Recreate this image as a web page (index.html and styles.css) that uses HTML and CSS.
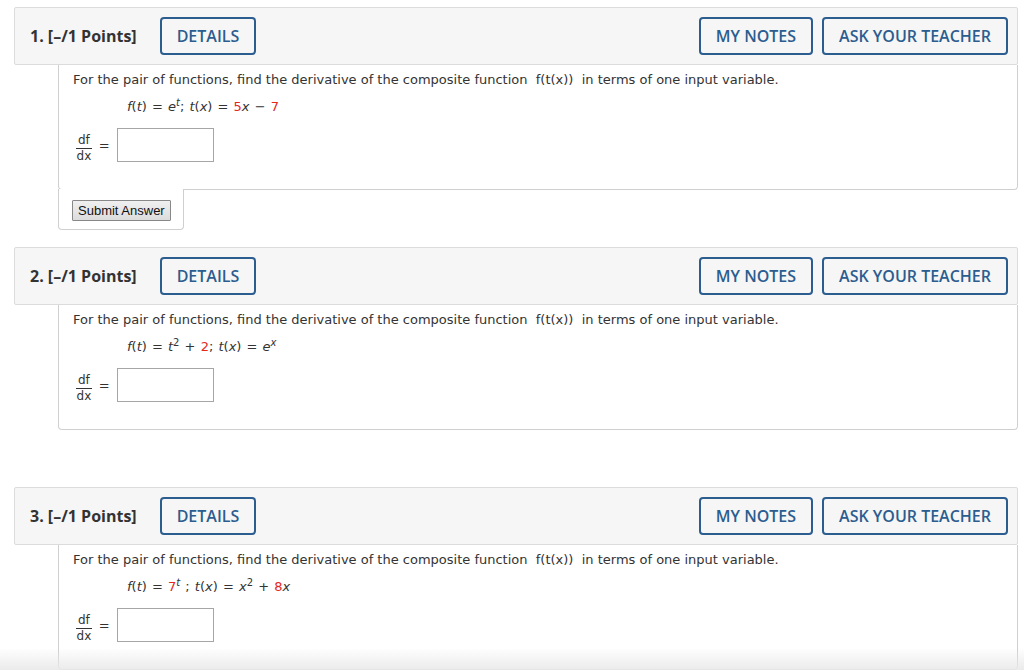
FILE: index.html
```html
<!DOCTYPE html>
<html lang="en">
<head>
    <meta charset="UTF-8">
    <meta name="viewport" content="width=device-width, initial-scale=1.0">
    <title>Assignment</title>
    <link rel="stylesheet" href="styles.css">
</head>
<body>

<div class="page">

    <div class="question">
        <div class="q-head">
            <span class="q-title">1. [&ndash;/1 Points]</span>
            <button type="button" class="btn details">DETAILS</button>
            <div class="q-tools">
                <button type="button" class="btn">MY NOTES</button>
                <button type="button" class="btn">ASK YOUR TEACHER</button>
            </div>
        </div>
        <div class="q-body">
            <p class="prompt">For the pair of functions, find the derivative of the composite function&nbsp; f(t(x))&nbsp; in terms of one input variable.</p>
            <div class="formula">
                <i>f</i>(<i>t</i>) = <i>e</i><sup><i>t</i></sup>; <i>t</i>(<i>x</i>) = <span class="red">5</span><i>x</i> &minus; <span class="red">7</span>
            </div>
            <div class="answer-row">
                <span class="frac"><span class="num">df</span><span class="den">dx</span></span>
                <span class="eq">=</span>
                <input type="text" class="answer">
            </div>
        </div>
        <div class="submit-row">
            <div class="submit-tab">
                <button type="button" class="submit">Submit Answer</button>
            </div>
        </div>
    </div>

    <div class="question">
        <div class="q-head">
            <span class="q-title">2. [&ndash;/1 Points]</span>
            <button type="button" class="btn details">DETAILS</button>
            <div class="q-tools">
                <button type="button" class="btn">MY NOTES</button>
                <button type="button" class="btn">ASK YOUR TEACHER</button>
            </div>
        </div>
        <div class="q-body">
            <p class="prompt">For the pair of functions, find the derivative of the composite function&nbsp; f(t(x))&nbsp; in terms of one input variable.</p>
            <div class="formula">
                <i>f</i>(<i>t</i>) = <i>t</i><sup>2</sup> + <span class="red">2</span>; <i>t</i>(<i>x</i>) = <i>e</i><sup><i>x</i></sup>
            </div>
            <div class="answer-row">
                <span class="frac"><span class="num">df</span><span class="den">dx</span></span>
                <span class="eq">=</span>
                <input type="text" class="answer">
            </div>
        </div>
        <div class="submit-row"></div>
    </div>

    <div class="question">
        <div class="q-head">
            <span class="q-title">3. [&ndash;/1 Points]</span>
            <button type="button" class="btn details">DETAILS</button>
            <div class="q-tools">
                <button type="button" class="btn">MY NOTES</button>
                <button type="button" class="btn">ASK YOUR TEACHER</button>
            </div>
        </div>
        <div class="q-body">
            <p class="prompt">For the pair of functions, find the derivative of the composite function&nbsp; f(t(x))&nbsp; in terms of one input variable.</p>
            <div class="formula">
                <i>f</i>(<i>t</i>) = <span class="red">7</span><sup><i>t</i></sup> ; <i>t</i>(<i>x</i>) = <i>x</i><sup>2</sup> + <span class="red">8</span><i>x</i>
            </div>
            <div class="answer-row">
                <span class="frac"><span class="num">df</span><span class="den">dx</span></span>
                <span class="eq">=</span>
                <input type="text" class="answer">
            </div>
        </div>
        <div class="submit-row"></div>
    </div>

</div>

<div class="bottom-fade"></div>

</body>
</html>
```

FILE: styles.css
```css
body {
    margin: 0;
    background-color: #fff;
    font-family: "DejaVu Sans", Verdana, sans-serif;
    color: #333;
    overflow: hidden;
}

.page {
    padding: 7px 6px 0 14px;
}

/* question header bar */
.q-head {
    display: flex;
    align-items: center;
    height: 56px;
    padding: 0 9px 0 15px;
    background-color: #f6f6f6;
    border: 1px solid #dcdcdc;
    border-radius: 2px;
}

.q-title {
    font-family: "Open Sans", sans-serif;
    font-weight: 700;
    font-size: 16px;
    color: #333;
    margin-right: 23px;
}

.q-tools {
    margin-left: auto;
    display: flex;
    gap: 9px;
}

.btn {
    height: 38px;
    padding: 0 15px;
    background-color: transparent;
    border: 2px solid #2c5d8f;
    border-radius: 4px;
    color: #2c5d8f;
    font-family: "Open Sans", sans-serif;
    font-weight: 600;
    font-size: 16px;
    cursor: pointer;
}

/* question body */
.q-body {
    margin-left: 44px;
    height: 125px;
    box-sizing: border-box;
    padding: 7px 14px 0;
    border: 1px solid #cfcfcf;
    border-top: none;
    border-radius: 0 0 4px 4px;
    font-size: 13px;
}

.prompt {
    margin: 0;
    line-height: 16px;
}

.formula {
    padding-left: 54px;
    margin-top: 11px;
    font-size: 13px;
    line-height: 16px;
    word-spacing: 1px;
}

.formula sup {
    font-size: 10px;
    line-height: 0;
}

.red {
    color: #e3281b;
}

.answer-row {
    display: flex;
    align-items: center;
    margin-top: 12px;
    padding-left: 3px;
}

.frac {
    display: inline-flex;
    flex-direction: column;
    align-items: center;
    margin-top: 7px;
    font-size: 12px;
    line-height: 13px;
}

.num {
    border-bottom: 1px solid #333;
    padding: 0 2px 1px;
}

.den {
    padding-top: 1px;
}

.eq {
    margin: 0 7px 0 7px;
}

.answer {
    width: 97px;
    height: 34px;
    box-sizing: border-box;
    border: 1px solid #a6a6a6;
    background: #fff;
}

/* submit tab below the body */
.submit-row {
    height: 40px;
    margin-left: 44px;
    margin-bottom: 17px;
}

.submit-tab {
    display: inline-block;
    margin-top: -1px;
    padding: 11px 12px 8px 13px;
    background: #fff;
    border: 1px solid #cfcfcf;
    border-top: none;
    border-radius: 0 0 4px 4px;
}

.submit {
    height: 21px;
    padding: 0 5px;
    font-family: "Liberation Sans", Arial, sans-serif;
    font-size: 13px;
    color: #111;
    background: linear-gradient(#f0f0f0, #dcdcdc);
    border: 1px solid #888;
    border-radius: 1px;
}

.bottom-fade {
    position: fixed;
    left: 0;
    right: 0;
    bottom: 0;
    height: 22px;
    background: linear-gradient(rgba(240, 240, 240, 0), rgba(232, 232, 232, 0.9));
}
```
